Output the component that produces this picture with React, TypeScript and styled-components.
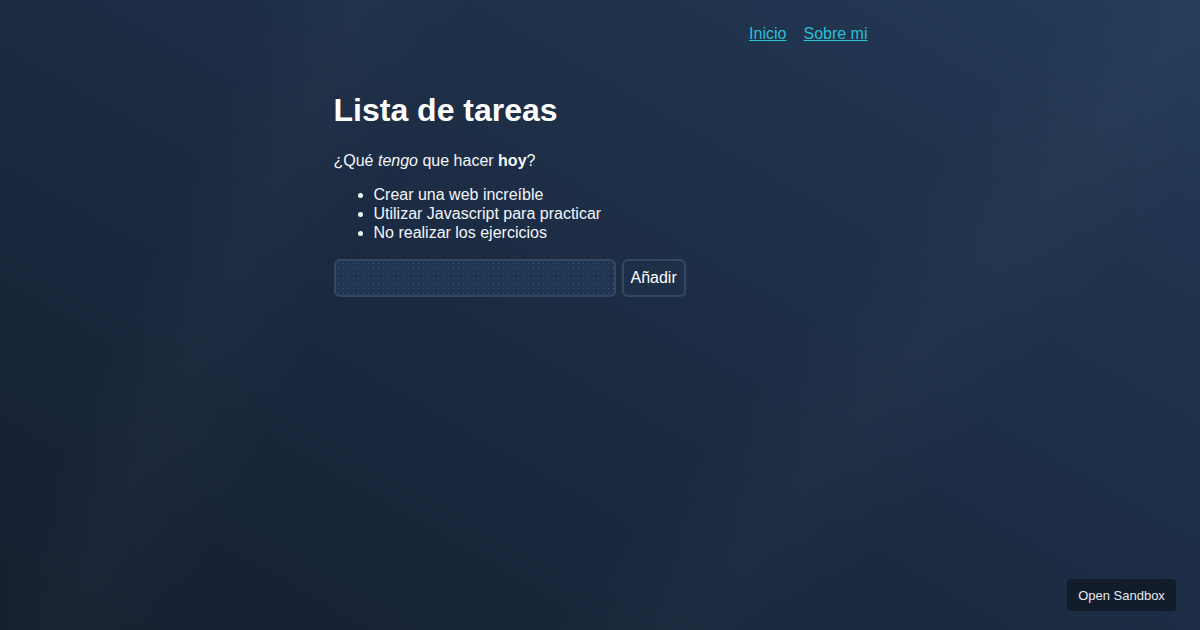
import styled, { createGlobalStyle } from "styled-components";

const GlobalStyle = createGlobalStyle`
  html, body {
    margin: 0;
    padding: 0;
    height: 100%;
  }
  body {
    font-family: "Liberation Sans", Arial, sans-serif;
    color: #f4f6fa;
    background-color: #1c2a40;
    background-image:
      linear-gradient(115deg, transparent 18%, rgba(255, 255, 255, 0.018) 24%, transparent 32%),
      linear-gradient(130deg, transparent 62%, rgba(255, 255, 255, 0.02) 70%, transparent 78%),
      linear-gradient(30deg, #151f2f 0%, #1b2a41 45%, #243a57 100%);
    min-height: 630px;
  }
`;

const tasks = [
  "Crear una web increíble",
  "Utilizar Javascript para practicar",
  "No realizar los ejercicios",
];

export default function App() {
  return (
    <>
      <GlobalStyle />
      <Page>
        <Nav>
          <NavLink href="#">Inicio</NavLink>
          <NavLink href="#">Sobre mi</NavLink>
        </Nav>
        <Main>
          <Title>Lista de tareas</Title>
          <Question>
            ¿Qué <em>tengo</em> que hacer <strong>hoy</strong>?
          </Question>
          <TaskList>
            {tasks.map((task) => (
              <li key={task}>{task}</li>
            ))}
          </TaskList>
          <Form onSubmit={(e) => e.preventDefault()}>
            <TaskInput type="text" />
            <AddButton type="submit">Añadir</AddButton>
          </Form>
        </Main>
      </Page>
      <SandboxButton>Open Sandbox</SandboxButton>
    </>
  );
}

const Page = styled.div`
  width: 533px;
  margin: 0 auto;
  padding-top: 25px;
`;

const Nav = styled.nav`
  display: flex;
  justify-content: flex-end;
  gap: 17px;
  margin-right: -1px;
  font-size: 16px;
`;

const NavLink = styled.a`
  color: #2bbfd6;
  text-decoration: underline;
`;

const Main = styled.main`
  padding-top: 26px;
`;

const Title = styled.h1`
  font-size: 32px;
  font-weight: 700;
  margin: 23px 0 23px;
  color: #ffffff;
`;

const Question = styled.p`
  font-size: 16px;
  margin: 0 0 15px;
`;

const TaskList = styled.ul`
  font-size: 16px;
  margin: 0 0 17px;
  padding-left: 40px;
  line-height: 19px;
`;

const Form = styled.form`
  display: flex;
  gap: 6px;
`;

const TaskInput = styled.input`
  width: 282px;
  height: 38px;
  box-sizing: border-box;
  border: 2px solid #344861;
  border-radius: 6px;
  background-color: #1f3552;
  background-image: radial-gradient(rgba(120, 150, 190, 0.35) 0.6px, transparent 0.9px);
  background-size: 5px 5px;
  color: #ffffff;
  font-family: inherit;
  font-size: 16px;
  padding: 0 10px;
  outline: none;
`;

const AddButton = styled.button`
  height: 38px;
  box-sizing: border-box;
  padding: 0 7px;
  border: 2px solid #344861;
  border-radius: 6px;
  background-color: #1e2f48;
  color: #ffffff;
  font-family: inherit;
  font-size: 16px;
  cursor: pointer;
`;

const SandboxButton = styled.button`
  position: fixed;
  right: 24px;
  bottom: 19px;
  width: 109px;
  height: 32px;
  border: none;
  border-radius: 4px;
  background: #131c2a;
  color: #e6e9ee;
  font-family: "Liberation Sans", Arial, sans-serif;
  font-size: 13px;
  cursor: pointer;
`;
